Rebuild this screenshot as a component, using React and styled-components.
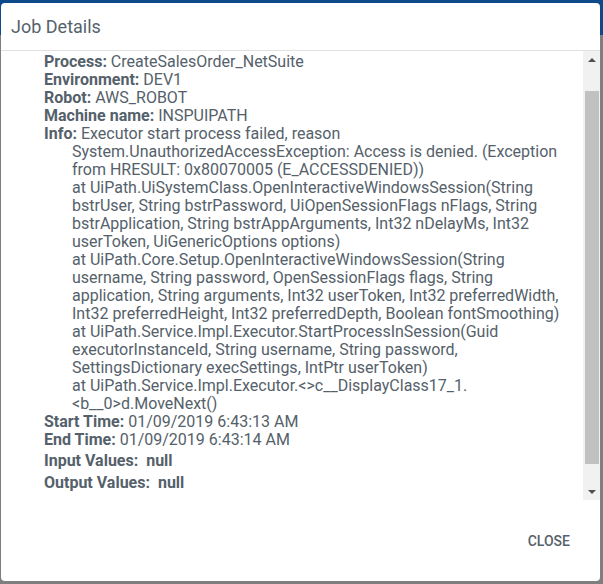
import React from "react";
import styled, { createGlobalStyle } from "styled-components";

const Global = createGlobalStyle`
  html, body { margin: 0; padding: 0; }
  body { font-family: Roboto, "Liberation Sans", Arial, sans-serif; }
`;

const Backdrop = styled.div`
  width: 603px;
  height: 584px;
  box-sizing: border-box;
  padding: 3px 0 0 1px;
  background: linear-gradient(#0e4a89 0, #0e4a89 35px, #7f7f7f 35px, #7f7f7f 100%);
  overflow: hidden;
`;

const Dialog = styled.div`
  width: 599px;
  height: 578px;
  background: #fff;
  border-radius: 4px;
  display: flex;
  flex-direction: column;
  overflow: hidden;
  color: #55616a;
`;

const Header = styled.div`
  height: 47px;
  flex: none;
  display: flex;
  align-items: center;
  padding-left: 10px;
  border-bottom: 1px solid #e1e1e1;
  font-size: 18px;
  font-weight: 400;
  color: #56626b;
`;

const BodyRow = styled.div`
  height: 449px;
  flex: none;
  display: flex;
`;

const Content = styled.div`
  flex: 1;
  padding: 2px 0 0 43px;
  font-size: 16px;
  line-height: 18px;
  overflow: hidden;
`;

const Field = styled.div`
  white-space: nowrap;
  margin-top: ${(p) => p.$gap || 0}px;
`;

const Label = styled.b`
  font-weight: 700;
`;

const Indented = styled.div`
  padding-left: 28px;
`;

const Line = styled.div`
  white-space: nowrap;
`;

const Track = styled.div`
  width: 17px;
  flex: none;
  background: #f1f1f1;
  display: flex;
  flex-direction: column;
  align-items: stretch;
`;

const Arrow = styled.div`
  height: 17px;
  flex: none;
  display: flex;
  align-items: center;
  justify-content: center;
  &::before {
    content: "";
    width: 0;
    height: 0;
    border-left: 4px solid transparent;
    border-right: 4px solid transparent;
    ${(p) =>
      p.$down
        ? "border-top: 4px solid #505050;"
        : "border-bottom: 4px solid #505050;"}
  }
`;

const Spacer = styled.div`
  flex: ${(p) => (p.$grow ? 1 : "none")};
  height: ${(p) => p.$h || 0}px;
`;

const Thumb = styled.div`
  height: 373px;
  flex: none;
  margin: 0 1px 0 2px;
  background: #c1c1c1;
`;

const Footer = styled.div`
  flex: 1;
  display: flex;
  align-items: center;
  justify-content: flex-end;
  padding-right: 22px;
`;

const CloseButton = styled.button`
  border: none;
  background: transparent;
  font-family: Roboto, "Liberation Sans", Arial, sans-serif;
  font-size: 14px;
  font-weight: 500;
  color: #56626b;
  text-transform: uppercase;
  padding: 8px 8px;
  cursor: pointer;
`;

const infoLines = [
  "System.UnauthorizedAccessException: Access is denied. (Exception",
  "from HRESULT: 0x80070005 (E_ACCESSDENIED))",
  "at UiPath.UiSystemClass.OpenInteractiveWindowsSession(String",
  "bstrUser, String bstrPassword, UiOpenSessionFlags nFlags, String",
  "bstrApplication, String bstrAppArguments, Int32 nDelayMs, Int32",
  "userToken, UiGenericOptions options)",
  "at UiPath.Core.Setup.OpenInteractiveWindowsSession(String",
  "username, String password, OpenSessionFlags flags, String",
  "application, String arguments, Int32 userToken, Int32 preferredWidth,",
  "Int32 preferredHeight, Int32 preferredDepth, Boolean fontSmoothing)",
  "at UiPath.Service.Impl.Executor.StartProcessInSession(Guid",
  "executorInstanceId, String username, String password,",
  "SettingsDictionary execSettings, IntPtr userToken)",
  "at UiPath.Service.Impl.Executor.<>c__DisplayClass17_1.",
  "<b__0>d.MoveNext()",
];

export default function App() {
  return (
    <>
      <Global />
      <Backdrop>
        <Dialog>
          <Header>Job Details</Header>
          <BodyRow>
            <Content>
              <Field><Label>Process:</Label> CreateSalesOrder_NetSuite</Field>
              <Field><Label>Environment:</Label> DEV1</Field>
              <Field><Label>Robot:</Label> AWS_ROBOT</Field>
              <Field><Label>Machine name:</Label> INSPUIPATH</Field>
              <Field><Label>Info:</Label> Executor start process failed, reason</Field>
              <Indented>
                {infoLines.map((l, i) => (
                  <Line key={i}>{l}</Line>
                ))}
              </Indented>
              <Field><Label>Start Time:</Label> 01/09/2019 6:43:13 AM</Field>
              <Field><Label>End Time:</Label> 01/09/2019 6:43:14 AM</Field>
              <Field $gap={3}><Label>Input Values:&nbsp; null</Label></Field>
              <Field $gap={4}><Label>Output Values:&nbsp; null</Label></Field>
            </Content>
            <Track>
              <Arrow />
              <Spacer $h={23} />
              <Thumb />
              <Spacer $grow />
              <Arrow $down />
            </Track>
          </BodyRow>
          <Footer>
            <CloseButton>Close</CloseButton>
          </Footer>
        </Dialog>
      </Backdrop>
    </>
  );
}
